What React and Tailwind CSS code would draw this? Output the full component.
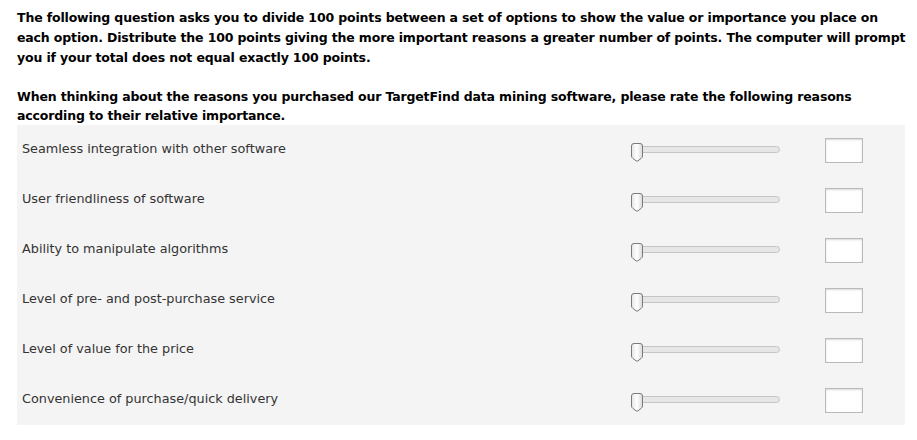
import React from "react";

const items = [
  "Seamless integration with other software",
  "User friendliness of software",
  "Ability to manipulate algorithms",
  "Level of pre- and post-purchase service",
  "Level of value for the price",
  "Convenience of purchase/quick delivery",
];

function Thumb() {
  return (
    <svg width="14" height="19" viewBox="0 0 14 19" className="block">
      <defs>
        <linearGradient id="tg" x1="0" y1="0" x2="1" y2="0">
          <stop offset="0" stopColor="#e4e4e4" />
          <stop offset="0.5" stopColor="#ffffff" />
          <stop offset="1" stopColor="#d8d8d8" />
        </linearGradient>
      </defs>
      <path
        d="M1.5 3 Q1.5 0.5 4 0.5 L10 0.5 Q12.5 0.5 12.5 3 L12.5 13 Q12.5 14.5 11 15.5 L8 17.8 Q7 18.5 6 17.8 L3 15.5 Q1.5 14.5 1.5 13 Z"
        fill="url(#tg)"
        stroke="#7a7a7a"
        strokeWidth="1"
      />
    </svg>
  );
}

function Row({ label }) {
  return (
    <div className="flex h-[50px] items-center">
      <div className="w-[608px] pl-[5px] pb-[2px] text-[12.8px] text-[#333]">{label}</div>
      <div className="relative mt-[4px] h-[19px] w-[155px]">
        <div className="absolute left-[10px] top-[3px] h-[7px] w-[145px] rounded-full border border-[#c4c4c4] bg-[#e6e6e6]" />
        <div className="absolute left-[5px] top-0">
          <Thumb />
        </div>
      </div>
      <div className="ml-[45px] h-[25px] w-[38px] border border-[#b9b9b9] bg-white shadow-[inset_0_1px_2px_rgba(0,0,0,0.15)]" />
    </div>
  );
}

export default function App() {
  return (
    <div
      className="w-[917px] h-[440px] bg-white px-[17px] pt-[8px]"
      style={{ fontFamily: '"DejaVu Sans", Verdana, sans-serif' }}
    >
      <p className="whitespace-nowrap text-[12.5px] font-bold leading-[20px] text-black tracking-[-0.15px]">
        The following question asks you to divide 100 points between a set of options to show the value or importance you place on
        <br />
        each option. Distribute the 100 points giving the more important reasons a greater number of points. The computer will prompt
        <br />
        you if your total does not equal exactly 100 points.
      </p>
      <p className="mt-[19px] whitespace-nowrap text-[12.5px] font-bold leading-[19px] text-black tracking-[-0.15px]">
        When thinking about the reasons you purchased our TargetFind data mining software, please rate the following reasons
        <br />
        according to their relative importance.
      </p>
      <div className="w-[888px] bg-[#f4f4f4]">
        {items.map((t) => (
          <Row key={t} label={t} />
        ))}
      </div>
    </div>
  );
}
